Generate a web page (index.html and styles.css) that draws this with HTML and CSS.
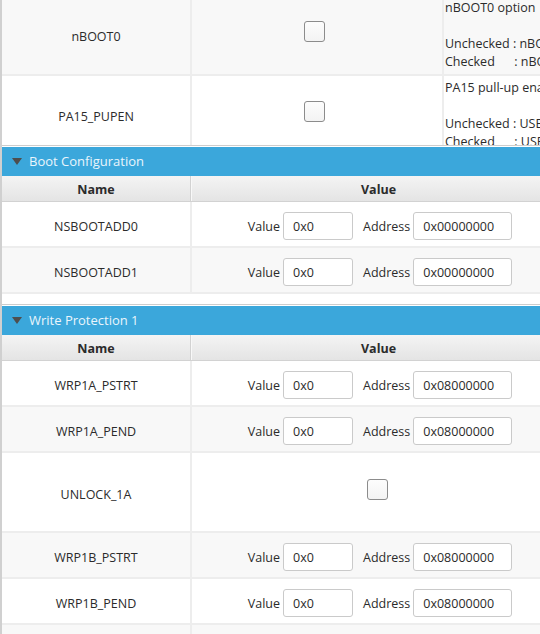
FILE: index.html
```html
<!DOCTYPE html>
<html>
<head>
<meta charset="utf-8">
<link rel="stylesheet" href="styles.css">
</head>
<body>
<div class="panel">
  <div class="pane-clip">
    <div class="rows rows3 shift">
      <div class="row gray tall">
        <div class="cell name">nBOOT0</div>
        <div class="cell val"><span class="cb"></span></div>
        <div class="cell desc">nBOOT0 option

Unchecked : nBOOT0=0
Checked      : nBOOT0=1</div>
      </div>
      <div class="row tall">
        <div class="cell name">PA15_PUPEN</div>
        <div class="cell val"><span class="cb"></span></div>
        <div class="cell desc">PA15 pull-up enable

Unchecked : USB power delivery dead-battery enabled/ TCPP3 is disabled
Checked      : USB power delivery dead-battery disabled/ TCPP3 is enabled</div>
      </div>
    </div>
  </div>

  <section class="pane">
    <div class="bar"><span class="tri"></span><span class="title">Boot Configuration</span></div>
    <div class="thead"><div class="th">Name</div><div class="th th-val">Value</div></div>
    <div class="rows">
      <div class="row">
        <div class="cell name">NSBOOTADD0</div>
        <div class="cell val"><span class="lbl">Value</span><span class="field f-val">0x0</span><span class="lbl">Address</span><span class="field f-addr">0x00000000</span></div>
      </div>
      <div class="row gray">
        <div class="cell name">NSBOOTADD1</div>
        <div class="cell val"><span class="lbl">Value</span><span class="field f-val">0x0</span><span class="lbl">Address</span><span class="field f-addr">0x00000000</span></div>
      </div>
    </div>
  </section>

  <section class="pane">
    <div class="bar"><span class="tri"></span><span class="title">Write Protection 1</span></div>
    <div class="thead"><div class="th">Name</div><div class="th th-val">Value</div></div>
    <div class="rows">
      <div class="row">
        <div class="cell name">WRP1A_PSTRT</div>
        <div class="cell val"><span class="lbl">Value</span><span class="field f-val">0x0</span><span class="lbl">Address</span><span class="field f-addr">0x08000000</span></div>
      </div>
      <div class="row gray">
        <div class="cell name">WRP1A_PEND</div>
        <div class="cell val"><span class="lbl">Value</span><span class="field f-val">0x0</span><span class="lbl">Address</span><span class="field f-addr">0x08000000</span></div>
      </div>
      <div class="row tall">
        <div class="cell name">UNLOCK_1A</div>
        <div class="cell val"><span class="cb"></span></div>
      </div>
      <div class="row gray">
        <div class="cell name">WRP1B_PSTRT</div>
        <div class="cell val"><span class="lbl">Value</span><span class="field f-val">0x0</span><span class="lbl">Address</span><span class="field f-addr">0x08000000</span></div>
      </div>
      <div class="row">
        <div class="cell name">WRP1B_PEND</div>
        <div class="cell val"><span class="lbl">Value</span><span class="field f-val">0x0</span><span class="lbl">Address</span><span class="field f-addr">0x08000000</span></div>
      </div>
      <div class="row gray tall">
        <div class="cell name"></div>
        <div class="cell val"></div>
      </div>
    </div>
  </section>
</div>
</body>
</html>
```

FILE: styles.css
```css
html, body {
  margin: 0;
  padding: 0;
  background: #ffffff;
  overflow: hidden;
  height: 634px;
}
body {
  font-family: "Open Sans", "DejaVu Sans", sans-serif;
  font-size: 12.5px;
  color: #2b2b2b;
}
.panel {
  width: 568px;
  border-left: 2px solid #d0d0d0;
  min-height: 634px;
}
.pane-clip {
  height: 145px;
  overflow: hidden;
}
.shift {
  margin-top: -4px;
}
.rows {
  display: flex;
  flex-direction: column;
  gap: 2px;
  background: #ededed;
  padding-bottom: 2px;
}
.row {
  display: grid;
  grid-template-columns: 188px 376px;
  column-gap: 2px;
  height: 44px;
  background: #ededed;
}
.rows3 .row {
  grid-template-columns: 188px 250px 200px;
}
.row.tall {
  height: 78px;
}
.cell {
  background: #ffffff;
  display: flex;
  align-items: center;
  justify-content: center;
  padding-top: 4px;
  box-sizing: border-box;
  overflow: hidden;
}
.rows3 .cell {
  padding-top: 3px;
}
.row.gray .cell {
  background: #f8f8f8;
}
.cell.desc {
  display: block;
  white-space: pre;
  line-height: 18px;
  padding: 3px 0 0 1px;
}
.cb {
  width: 19px;
  height: 19px;
  border: 1px solid #8c8c8c;
  border-radius: 3px;
  background: linear-gradient(#fdfdfd, #f3f3f3);
  margin: 0 5px 10px 0;
}
.lbl {
  margin-right: 3px;
}
.field {
  height: 28px;
  box-sizing: border-box;
  border: 1px solid #cacaca;
  border-radius: 3px;
  background: #ffffff;
  display: flex;
  align-items: center;
  padding-left: 9px;
  margin-right: 10px;
}
.f-val {
  width: 70px;
}
.f-addr {
  width: 99px;
  margin-right: 0;
}
.pane {
  border-top: 1px solid #cdcdcd;
  padding-bottom: 10px;
}
.bar {
  height: 28px;
  padding-bottom: 1px;
  border-top: 1px solid #ffffff;
  background: #3ba7db;
  display: flex;
  align-items: center;
  color: #eaf5fc;
  font-size: 13px;
}
.tri {
  width: 0;
  height: 0;
  border-left: 5px solid transparent;
  border-right: 5px solid transparent;
  border-top: 7px solid #4e4e4e;
  margin: 1px 7px 0 10px;
}
.thead {
  display: grid;
  grid-template-columns: 188px 378px;
  height: 26px;
  box-sizing: border-box;
  border-bottom: 1px solid #d2d2d2;
  background: linear-gradient(#f4f4f4, #e4e4e4);
}
.th {
  display: flex;
  align-items: center;
  justify-content: center;
  font-weight: bold;
  color: #2b2b2b;
  padding-top: 1px;
}
.th-val {
  border-left: 1px solid #d2d2d2;
  box-shadow: inset 1px 0 0 #f8f8f8;
  padding-right: 2px;
}
```
